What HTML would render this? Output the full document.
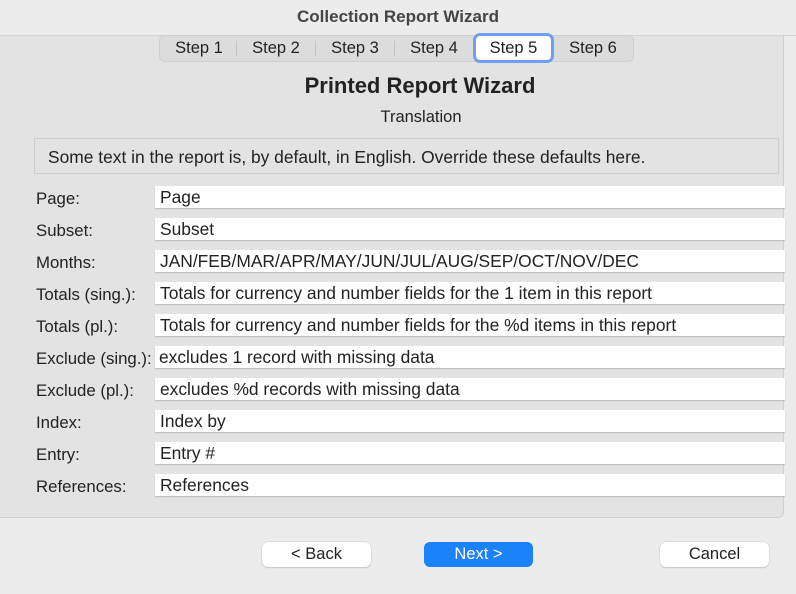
<!DOCTYPE html>
<html><head><style>
body{margin:0;width:796px;height:594px;background:#ececec;font-family:"Liberation Sans",sans-serif;position:relative;overflow:hidden;color:#222}
.a{position:absolute}
#title{left:0;top:0;width:796px;height:35px;text-align:center;line-height:33px;font-weight:bold;font-size:17px;color:#444;border-bottom:1px solid #d6d6d6}
#panel{left:0;top:36px;width:783px;height:481px;background:#e3e3e3;border-right:1px solid #d0d0d0;border-bottom:1px solid #d0d0d0;border-radius:0 0 6px 0}
#seg{left:159px;top:35px;width:475px;height:27px;background:#dcdcdc;border:1px solid #d0d0d0;border-radius:6px;box-sizing:border-box}
.t{top:35px;height:27px;line-height:27px;font-size:16.5px;color:#222;text-align:center}
.sep{top:41px;width:1px;height:15px;background:#c4c4c4}
#sel{left:473px;top:33px;width:81px;height:30px;box-sizing:border-box;background:#fff;border:3px solid #6fa0ee;border-radius:7px;text-align:center;line-height:25px;font-size:16.5px}
.lab{left:36px;font-size:16.8px;height:22px;line-height:24px}
.f{left:155px;width:630px;height:22px;background:#fff;box-shadow:0 1px 1px #bbb;font-size:17.4px;line-height:22px;padding-left:5px;box-sizing:border-box;color:#222}
.b{top:542px;height:25px;width:109px;border-radius:6px;background:#fff;box-shadow:0 0 0 .5px #ccc,0 1px 1px #bbb;text-align:center;line-height:25px;font-size:16.5px}
</style></head><body>
<div class="a" id="title">Collection Report Wizard</div>
<div class="a" id="panel"></div>
<div class="a" id="seg"></div>
<div class="a t" style="left:163px;width:72px">Step 1</div>
<div class="a sep" style="left:236px"></div>
<div class="a t" style="left:240px;width:72px">Step 2</div>
<div class="a sep" style="left:315px"></div>
<div class="a t" style="left:319px;width:72px">Step 3</div>
<div class="a sep" style="left:394px"></div>
<div class="a t" style="left:398px;width:72px">Step 4</div>
<div class="a" id="sel">Step 5</div>
<div class="a t" style="left:556px;width:74px">Step 6</div>
<div class="a" style="left:0;width:840px;top:73px;text-align:center;font-weight:bold;font-size:22px">Printed Report Wizard</div>
<div class="a" style="left:0;width:842px;top:108px;text-align:center;font-size:16.5px">Translation</div>
<div class="a" style="left:34px;top:138px;width:745px;height:36px;box-sizing:border-box;border:1px solid #cfcfcf;background:#e3e3e3;font-size:17.4px;line-height:36px;padding-left:13px">Some text in the report is, by default, in English. Override these defaults here.</div>
<div class="a lab" style="top:187px">Page:</div><div class="a f" style="top:186px">Page</div>
<div class="a lab" style="top:219px">Subset:</div><div class="a f" style="top:218px">Subset</div>
<div class="a lab" style="top:251px">Months:</div><div class="a f" style="top:250px">JAN/FEB/MAR/APR/MAY/JUN/JUL/AUG/SEP/OCT/NOV/DEC</div>
<div class="a lab" style="top:283px">Totals (sing.):</div><div class="a f" style="top:282px">Totals for currency and number fields for the 1 item in this report</div>
<div class="a lab" style="top:315px">Totals (pl.):</div><div class="a f" style="top:314px">Totals for currency and number fields for the %d items in this report</div>
<div class="a lab" style="top:347px">Exclude (sing.):</div><div class="a f" style="top:346px;padding-left:4px">excludes 1 record with missing data</div>
<div class="a lab" style="top:379px">Exclude (pl.):</div><div class="a f" style="top:378px">excludes %d records with missing data</div>
<div class="a lab" style="top:411px">Index:</div><div class="a f" style="top:410px">Index by</div>
<div class="a lab" style="top:443px">Entry:</div><div class="a f" style="top:442px">Entry #</div>
<div class="a lab" style="top:475px">References:</div><div class="a f" style="top:474px">References</div>
<div class="a b" style="left:262px">&lt; Back</div>
<div class="a b" style="left:424px;background:#1a82fb;color:#fff;box-shadow:none">Next &gt;</div>
<div class="a b" style="left:660px">Cancel</div>
</body></html>
